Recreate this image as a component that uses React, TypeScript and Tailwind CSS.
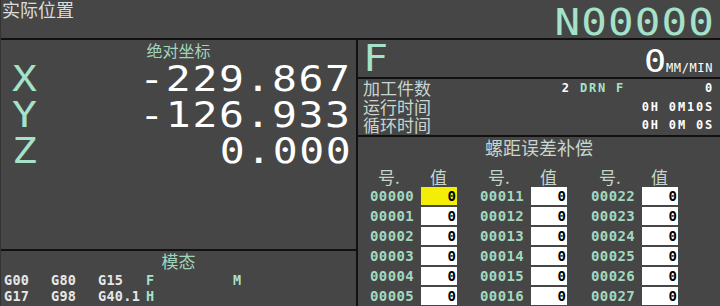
const mono = "font-['DejaVu_Sans_Mono',monospace]";
const cjk = "font-['Noto_Sans_CJK_SC','Noto_Sans',sans-serif]";

const axes = [
  { name: 'X', value: '-229.867' },
  { name: 'Y', value: '-126.933' },
  { name: 'Z', value: '0.000' },
];

const pad = (n: number) => String(n).padStart(5, '0');

const PitchColumn = ({ start, width }: { start: number; width: string }) => (
  <div className={`${width} flex flex-col`}>
    <div className={`${cjk} flex h-[18px] text-[17px] leading-[18px] text-[#c4d6cc]`}>
      <span className="w-[60px] pl-[8px]">号.</span>
      <span>值</span>
    </div>
    <div className="mt-[1px] flex flex-col gap-[2px]">
      {Array.from({ length: 6 }).map((_, i) => (
        <div key={i} className="flex h-[18px] items-center">
          <span className={`${mono} w-[51px] text-[14px] font-bold leading-[18px] tracking-[0.4px] text-[#a3d8c0]`}>
            {pad(start + i)}
          </span>
          <span
            className={`${mono} h-[18px] w-[36px] pr-[1px] text-right text-[14px] font-bold leading-[18px] text-black ${
              start + i === 0 ? 'bg-[#f4ee06]' : 'bg-white'
            }`}
          >
            0
          </span>
        </div>
      ))}
    </div>
  </div>
);

export default function App() {
  return (
    <div className="flex h-[306px] w-[720px] flex-col overflow-hidden border-l border-[#333] bg-[#464646]">
      {/* top bar */}
      <div className="flex h-[40px] shrink-0 justify-between border-b-2 border-[#111]">
        <span className={`${cjk} pl-[1px] text-[18px] leading-[19px] text-[#dcdcdc]`}>实际位置</span>
        <span
          className={`${mono} inline-block origin-right scale-x-[1.15] pr-[4px] pt-[4px] text-[37px] leading-[37px] tracking-[1px] text-[#a4e2c9]`}
        >
          N00000
        </span>
      </div>

      <div className="flex flex-1">
        {/* left panel */}
        <div className="flex w-[357px] flex-col border-r-2 border-[#111]">
          <div className="h-[211px] border-b-2 border-[#111]">
            <div className={`${cjk} h-[21px] text-center text-[16px] leading-[21px] text-[#a2d4bc]`}>绝对坐标</div>
            {axes.map((a) => (
              <div
                key={a.name}
                className={`${mono} flex h-[36px] justify-between pl-[11px] pr-[4px] text-[36px] leading-[36px]`}
              >
                <span className="inline-block origin-left scale-x-[1.15] text-[#a4e2c9]">{a.name}</span>
                <span className="inline-block origin-right scale-x-[1.15] tracking-[1.4px] text-white">{a.value}</span>
              </div>
            ))}
          </div>
          <div className="flex-1">
            <div className={`${cjk} h-[21px] text-center text-[17px] leading-[20px] text-[#a2d4bc]`}>模态</div>
            <div
              className={`${mono} grid grid-cols-[47px_47px_48px_87px_auto] pl-[3px] text-[13.5px] font-bold leading-[16px] tracking-[0.3px] text-[#e6e6e6]`}
            >
              <span>G00</span>
              <span>G80</span>
              <span>G15</span>
              <span className="text-[#a4e2c9]">F</span>
              <span className="text-[#a4e2c9]">M</span>
              <span>G17</span>
              <span>G98</span>
              <span>G40.1</span>
              <span className="text-[#a4e2c9]">H</span>
              <span></span>
            </div>
          </div>
        </div>

        {/* right panel */}
        <div className="flex flex-1 flex-col">
          <div className={`${mono} flex h-[39px] items-end justify-between border-b-2 border-[#111] pl-[5px] pr-[7px]`}>
            <span className="inline-block origin-left scale-x-[1.1] text-[38px] leading-[38px] text-[#a4e2c9]">F</span>
            <span className="flex items-end">
              <span className="inline-block origin-right scale-x-[1.15] text-[32px] leading-[32px] text-white">0</span>
              <span className="pb-[3px] text-[12px] leading-[12px] tracking-[0.6px] text-white">MM/MIN</span>
            </span>
          </div>

          <div className={`${cjk} h-[58px] overflow-hidden border-b-2 border-[#111] pl-[5px] pr-[6px] text-[17px] leading-[18.7px] text-[#c8d6cf]`}>
            <div className="flex items-center">
              <span className="flex-1">加工件数</span>
              <span className={`${mono} text-[12px] font-bold tracking-[1.8px] text-white`}>
                2 <span className="text-[#a4e2c9]">DRN F</span>
              </span>
              <span className={`${mono} w-[89px] text-right text-[12px] font-bold tracking-[1.8px] text-white`}>0</span>
            </div>
            <div className="flex items-center">
              <span className="flex-1">运行时间</span>
              <span className={`${mono} text-[12px] font-bold tracking-[1.8px] text-white`}>0H 0M10S</span>
            </div>
            <div className="flex items-center">
              <span className="flex-1">循环时间</span>
              <span className={`${mono} text-[12px] font-bold tracking-[1.8px] text-white`}>0H 0M 0S</span>
            </div>
          </div>

          <div className="flex-1">
            <div className={`${cjk} h-[21px] text-center text-[18px] leading-[21px] text-[#c8d6cf]`}>螺距误差补偿</div>
            <div className="mt-[10px] flex pl-[12px]">
              <PitchColumn start={0} width="w-[110px]" />
              <PitchColumn start={11} width="w-[111px]" />
              <PitchColumn start={22} width="w-[111px]" />
            </div>
          </div>
        </div>
      </div>
    </div>
  );
}
